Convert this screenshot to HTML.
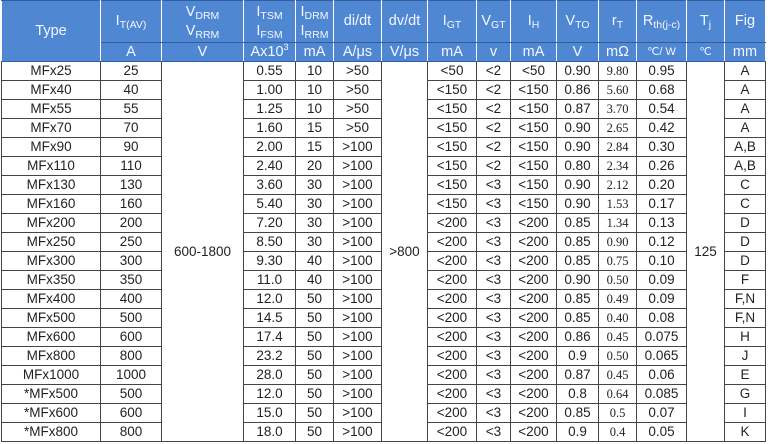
<!DOCTYPE html>
<html><head><meta charset="utf-8"><style>
html,body{margin:0;padding:0;background:#fff;width:768px;height:444px;overflow:hidden}
table{position:absolute;left:1px;top:0;border-collapse:collapse;table-layout:fixed;font-family:"Liberation Sans",sans-serif;font-size:13.5px;color:#222}
td,th{border:1px solid #444;text-align:center;padding:0;height:18px;line-height:18px;white-space:nowrap;overflow:hidden}
th{background:#4f87d2;color:#f4f8ff;font-weight:normal;border-color:#2f5f9f;border-left-color:#fff;border-right-color:#fff}
tr.h1 th{height:42px;line-height:19px;font-size:14.5px;box-sizing:border-box}
tr.h2 th{height:18px;line-height:18px;font-size:14.5px;border-top-color:#fff}
sub{font-size:10.5px;vertical-align:-3px;line-height:0}
sup{line-height:0}
.s{font-size:12.5px;font-family:"Liberation Serif",serif}
</style></head><body>
<table>
<colgroup>
<col style="width:99px"><col style="width:61px"><col style="width:82px"><col style="width:52px"><col style="width:38px"><col style="width:48px"><col style="width:46px"><col style="width:49px"><col style="width:34px"><col style="width:46px"><col style="width:42px"><col style="width:38px"><col style="width:50px"><col style="width:38px"><col style="width:41px">
</colgroup>
<tr class="h1"><th rowspan="2" style="line-height:18px">Type</th><th>I<sub>T(AV)</sub></th><th>V<sub>DRM</sub><br>V<sub>RRM</sub></th><th>I<sub>TSM</sub><br>I<sub>FSM</sub></th><th>I<sub>DRM</sub><br>I<sub>RRM</sub></th><th>di/dt</th><th>dv/dt</th><th>I<sub>GT</sub></th><th>V<sub>GT</sub></th><th>I<sub>H</sub></th><th>V<sub>TO</sub></th><th>r<sub>T</sub></th><th>R<sub>th(j-c)</sub></th><th>T<sub>j</sub></th><th>Fig</th></tr>
<tr class="h2"><th>A</th><th>V</th><th>Ax10<sup style="font-size:9px">3</sup></th><th>mA</th><th>A/μs</th><th>V/μs</th><th>mA</th><th>v</th><th>mA</th><th>V</th><th>mΩ</th><th style="font-size:11px">℃/ W</th><th style="font-size:11px">℃</th><th>mm</th></tr>
<tr><td>MFx25</td><td>25</td><td rowspan="20">600-1800</td><td>0.55</td><td>10</td><td>&gt;50</td><td rowspan="20">&gt;800</td><td>&lt;50</td><td>&lt;2</td><td>&lt;50</td><td>0.90</td><td class="s">9.80</td><td>0.95</td><td rowspan="20">125</td><td>A</td></tr>
<tr><td>MFx40</td><td>40</td><td>1.00</td><td>10</td><td>&gt;50</td><td>&lt;150</td><td>&lt;2</td><td>&lt;150</td><td>0.86</td><td class="s">5.60</td><td>0.68</td><td>A</td></tr>
<tr><td>MFx55</td><td>55</td><td>1.25</td><td>10</td><td>&gt;50</td><td>&lt;150</td><td>&lt;2</td><td>&lt;150</td><td>0.87</td><td class="s">3.70</td><td>0.54</td><td>A</td></tr>
<tr><td>MFx70</td><td>70</td><td>1.60</td><td>15</td><td>&gt;50</td><td>&lt;150</td><td>&lt;2</td><td>&lt;150</td><td>0.90</td><td class="s">2.65</td><td>0.42</td><td>A</td></tr>
<tr><td>MFx90</td><td>90</td><td>2.00</td><td>15</td><td>&gt;100</td><td>&lt;150</td><td>&lt;2</td><td>&lt;150</td><td>0.90</td><td class="s">2.84</td><td>0.30</td><td>A,B</td></tr>
<tr><td>MFx110</td><td>110</td><td>2.40</td><td>20</td><td>&gt;100</td><td>&lt;150</td><td>&lt;2</td><td>&lt;150</td><td>0.80</td><td class="s">2.34</td><td>0.26</td><td>A,B</td></tr>
<tr><td>MFx130</td><td>130</td><td>3.60</td><td>30</td><td>&gt;100</td><td>&lt;150</td><td>&lt;3</td><td>&lt;150</td><td>0.90</td><td class="s">2.12</td><td>0.20</td><td>C</td></tr>
<tr><td>MFx160</td><td>160</td><td>5.40</td><td>30</td><td>&gt;100</td><td>&lt;150</td><td>&lt;3</td><td>&lt;150</td><td>0.90</td><td class="s">1.53</td><td>0.17</td><td>C</td></tr>
<tr><td>MFx200</td><td>200</td><td>7.20</td><td>30</td><td>&gt;100</td><td>&lt;200</td><td>&lt;3</td><td>&lt;200</td><td>0.85</td><td class="s">1.34</td><td>0.13</td><td>D</td></tr>
<tr><td>MFx250</td><td>250</td><td>8.50</td><td>30</td><td>&gt;100</td><td>&lt;200</td><td>&lt;3</td><td>&lt;200</td><td>0.85</td><td class="s">0.90</td><td>0.12</td><td>D</td></tr>
<tr><td>MFx300</td><td>300</td><td>9.30</td><td>40</td><td>&gt;100</td><td>&lt;200</td><td>&lt;3</td><td>&lt;200</td><td>0.85</td><td class="s">0.75</td><td>0.10</td><td>D</td></tr>
<tr><td>MFx350</td><td>350</td><td>11.0</td><td>40</td><td>&gt;100</td><td>&lt;200</td><td>&lt;3</td><td>&lt;200</td><td>0.90</td><td class="s">0.50</td><td>0.09</td><td>F</td></tr>
<tr><td>MFx400</td><td>400</td><td>12.0</td><td>50</td><td>&gt;100</td><td>&lt;200</td><td>&lt;3</td><td>&lt;200</td><td>0.85</td><td class="s">0.49</td><td>0.09</td><td>F,N</td></tr>
<tr><td>MFx500</td><td>500</td><td>14.5</td><td>50</td><td>&gt;100</td><td>&lt;200</td><td>&lt;3</td><td>&lt;200</td><td>0.85</td><td class="s">0.40</td><td>0.08</td><td>F,N</td></tr>
<tr><td>MFx600</td><td>600</td><td>17.4</td><td>50</td><td>&gt;100</td><td>&lt;200</td><td>&lt;3</td><td>&lt;200</td><td>0.86</td><td class="s">0.45</td><td>0.075</td><td>H</td></tr>
<tr><td>MFx800</td><td>800</td><td>23.2</td><td>50</td><td>&gt;100</td><td>&lt;200</td><td>&lt;3</td><td>&lt;200</td><td>0.9</td><td class="s">0.50</td><td>0.065</td><td>J</td></tr>
<tr><td>MFx1000</td><td>1000</td><td>28.0</td><td>50</td><td>&gt;100</td><td>&lt;200</td><td>&lt;3</td><td>&lt;200</td><td>0.87</td><td class="s">0.45</td><td>0.06</td><td>E</td></tr>
<tr><td>*MFx500</td><td>500</td><td>12.0</td><td>50</td><td>&gt;100</td><td>&lt;200</td><td>&lt;3</td><td>&lt;200</td><td>0.8</td><td class="s">0.64</td><td>0.085</td><td>G</td></tr>
<tr><td>*MFx600</td><td>600</td><td>15.0</td><td>50</td><td>&gt;100</td><td>&lt;200</td><td>&lt;3</td><td>&lt;200</td><td>0.85</td><td class="s">0.5</td><td>0.07</td><td>I</td></tr>
<tr><td>*MFx800</td><td>800</td><td>18.0</td><td>50</td><td>&gt;100</td><td>&lt;200</td><td>&lt;3</td><td>&lt;200</td><td>0.9</td><td class="s">0.4</td><td>0.05</td><td>K</td></tr>
</table>
</body></html>
